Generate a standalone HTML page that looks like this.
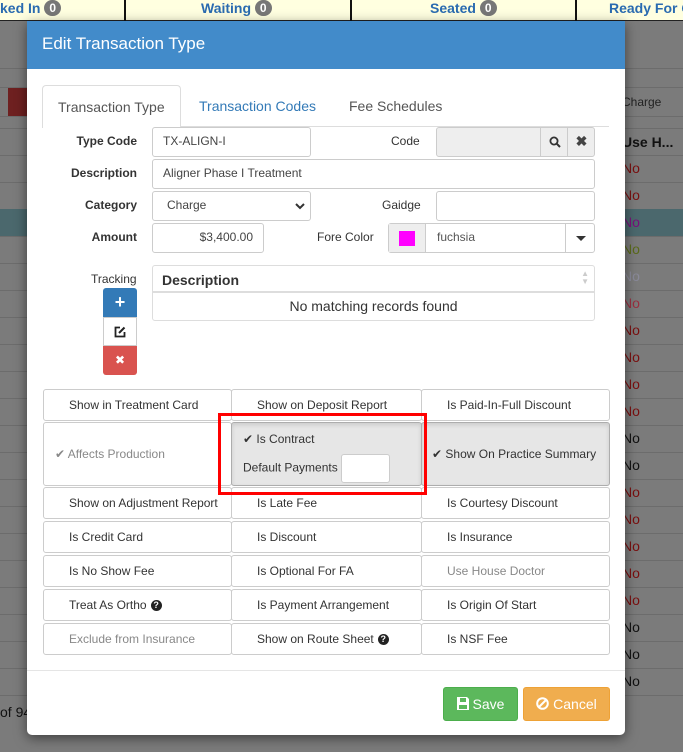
<!DOCTYPE html>
<html><head><meta charset="utf-8"><style>
*{box-sizing:border-box;margin:0;padding:0}
body{width:683px;height:752px;overflow:hidden;font-family:"Liberation Sans",sans-serif;background:#7b7b7b;position:relative;font-size:12px;color:#333}
.top{position:absolute;left:0;top:0;width:683px;height:21px;background:#ffffe0;border-bottom:1px solid #222}
.top div{position:absolute;top:0;height:21px;font-weight:bold;color:#2a6bb0;font-size:14px;line-height:17px}
.badge{display:inline-block;background:#777;color:#fff;border-radius:9px;font-size:12px;padding:0 5px;line-height:16px;vertical-align:1px}
.sep{position:absolute;top:0;width:2px;height:21px;background:#111}
.bgrow{position:absolute;left:0;width:683px;height:1px;background:#6c6c6c}
.no{position:absolute;left:622px;font-size:14px}
.modal{position:absolute;left:27px;top:21px;width:598px;height:714px;background:#fff;border-radius:0 0 5px 5px;box-shadow:0 3px 12px rgba(0,0,0,.5)}
.hdr{height:48px;background:#428bca;color:#fff;font-size:17px;padding:13px 0 0 15px}
.abs{position:absolute}
.inp{position:absolute;border:1px solid #ccc;border-radius:3px;background:#fff;font-size:12px;padding:0 10px;line-height:27px;color:#444}
.lbl{position:absolute;font-weight:bold;font-size:12px;text-align:right;color:#333}
.lbl2{position:absolute;font-size:12px;color:#333;white-space:nowrap}
.cell{position:absolute;border:1px solid #ccc;border-radius:3px;background:#fff;font-size:12px;color:#333;padding-left:25px;display:flex;align-items:center}
.gray{color:#888}
.act{background:#e6e6e6;border-color:#adadad;box-shadow:inset 0 2px 4px rgba(0,0,0,.12)}
.q{display:inline-block;width:11px;height:11px;border-radius:50%;background:#222;color:#fff;font-size:9px;font-weight:bold;text-align:center;line-height:11px;margin-left:4px}
</style></head><body>
<div class="top">
<div style="left:0">ked In <span class="badge">0</span></div>
<div style="left:201px">Waiting <span class="badge">0</span></div>
<div style="left:430px">Seated <span class="badge">0</span></div>
<div style="left:609px;white-space:nowrap">Ready For C</div>
<div class="sep" style="left:124px"></div><div class="sep" style="left:350px"></div><div class="sep" style="left:575px"></div>
</div>
<div class="abs" style="left:8px;top:88px;width:20px;height:28px;background:#6e2020"></div>
<div class="abs" style="left:622px;top:95px;font-size:12px;color:#222">Charge</div>
<div class="abs" style="left:622px;top:134px;font-size:14px;font-weight:bold;color:#111">Use H...</div>
<div class="abs" style="left:0;top:209px;width:683px;height:27px;background:#4b686d"></div>
<div class="bgrow" style="top:68px"></div><div class="bgrow" style="top:87px"></div><div class="bgrow" style="top:116px"></div>
<div class="bgrow" style="top:128px"></div><div class="bgrow" style="top:155px"></div><div class="bgrow" style="top:182px"></div><div class="bgrow" style="top:236px"></div><div class="bgrow" style="top:263px"></div><div class="bgrow" style="top:290px"></div><div class="bgrow" style="top:317px"></div><div class="bgrow" style="top:344px"></div><div class="bgrow" style="top:371px"></div><div class="bgrow" style="top:398px"></div><div class="bgrow" style="top:425px"></div><div class="bgrow" style="top:452px"></div><div class="bgrow" style="top:479px"></div><div class="bgrow" style="top:506px"></div><div class="bgrow" style="top:533px"></div><div class="bgrow" style="top:560px"></div><div class="bgrow" style="top:587px"></div><div class="bgrow" style="top:614px"></div><div class="bgrow" style="top:641px"></div><div class="bgrow" style="top:668px"></div><div class="bgrow" style="top:695px"></div>
<div class="no" style="top:160px;color:#7a0f0f">No</div>
<div class="no" style="top:187px;color:#7a0f0f">No</div>
<div class="no" style="top:214px;color:#7a107a">No</div>
<div class="no" style="top:241px;color:#5a6a1a">No</div>
<div class="no" style="top:268px;color:#8a8a9a">No</div>
<div class="no" style="top:295px;color:#9a3040">No</div>
<div class="no" style="top:322px;color:#7a0f0f">No</div>
<div class="no" style="top:349px;color:#7a0f0f">No</div>
<div class="no" style="top:376px;color:#7a0f0f">No</div>
<div class="no" style="top:403px;color:#7a0f0f">No</div>
<div class="no" style="top:430px;color:#111">No</div>
<div class="no" style="top:457px;color:#111">No</div>
<div class="no" style="top:484px;color:#7a0f0f">No</div>
<div class="no" style="top:511px;color:#7a0f0f">No</div>
<div class="no" style="top:538px;color:#7a0f0f">No</div>
<div class="no" style="top:565px;color:#7a0f0f">No</div>
<div class="no" style="top:592px;color:#7a0f0f">No</div>
<div class="no" style="top:619px;color:#111">No</div>
<div class="no" style="top:646px;color:#111">No</div>
<div class="no" style="top:673px;color:#111">No</div>
<div class="abs" style="left:0;top:704px;font-size:14px;color:#111">of 94</div>

<div class="modal">
<div class="hdr">Edit Transaction Type</div>
<div class="abs" style="left:15px;top:64px;width:139px;height:43px;border:1px solid #ddd;border-bottom:none;border-radius:4px 4px 0 0;background:#fff;font-size:14px;color:#555;padding:13px 0 0 15px">Transaction Type</div>
<div class="abs" style="left:153px;top:105px;width:429px;height:1px;background:#ddd"></div>
<div class="abs" style="left:172px;top:77px;font-size:14px;color:#337ab7">Transaction Codes</div>
<div class="abs" style="left:322px;top:77px;font-size:14px;color:#555">Fee Schedules</div>
<div class="lbl" style="left:20px;width:90px;top:113px">Type Code</div>
<div class="inp" style="left:125px;top:106px;width:159px;height:30px">TX-ALIGN-I</div>
<div class="lbl2" style="left:364px;top:113px">Code</div>
<div class="inp" style="left:409px;top:106px;width:159px;height:30px;background:#eee;padding:0">
<div class="abs" style="left:103px;top:0;width:28px;height:28px;border-left:1px solid #ccc;text-align:center"><svg width="12" height="12" viewBox="0 0 12 12" style="margin-top:8px"><circle cx="5" cy="5" r="3.6" fill="none" stroke="#333" stroke-width="1.8"/><path d="M7.6 7.6L11 11" stroke="#333" stroke-width="2"/></svg></div>
<div class="abs" style="left:130px;top:0;width:28px;height:28px;border-left:1px solid #ccc;text-align:center;font-weight:bold;font-size:14px;color:#444">✖</div>
</div>
<div class="lbl" style="left:20px;width:90px;top:145px">Description</div>
<div class="inp" style="left:125px;top:138px;width:443px;height:30px">Aligner Phase I Treatment</div>
<div class="lbl" style="left:20px;width:90px;top:177px">Category</div>
<div class="inp" style="left:125px;top:170px;width:159px;height:30px;padding-left:14px">Charge<svg class="abs" style="left:142px;top:11px" width="10" height="7" viewBox="0 0 10 7"><path d="M1 1l4 4 4-4" fill="none" stroke="#333" stroke-width="2"/></svg></div>
<div class="lbl2" style="left:355px;top:177px">Gaidge</div>
<div class="inp" style="left:409px;top:170px;width:159px;height:30px"></div>
<div class="lbl" style="left:20px;width:90px;top:209px">Amount</div>
<div class="inp" style="left:125px;top:202px;width:112px;height:30px;text-align:right">$3,400.00</div>
<div class="lbl2" style="left:290px;top:209px">Fore Color</div>
<div class="inp" style="left:361px;top:202px;width:207px;height:30px;padding:0">
<div class="abs" style="left:0;top:0;width:37px;height:28px;background:#eee;border-right:1px solid #ccc"><div class="abs" style="left:10px;top:7px;width:16px;height:15px;background:#f0f"></div></div>
<div class="abs" style="left:48px;top:0;color:#555">fuchsia</div>
<div class="abs" style="left:176px;top:0;width:30px;height:28px;border-left:1px solid #ccc"><div class="abs" style="left:10px;top:12px;border-left:5px solid transparent;border-right:5px solid transparent;border-top:5px solid #333"></div></div>
</div>
<div class="lbl2" style="left:64px;top:251px">Tracking</div>
<div class="abs" style="left:76px;top:267px;width:34px;height:29px;background:#337ab7;border-radius:3px 3px 0 0;color:#fff;text-align:center;font-size:18px;font-weight:bold;line-height:28px">+</div>
<div class="abs" style="left:76px;top:296px;width:34px;height:29px;background:#fff;border:1px solid #ccc;text-align:center"><svg width="12" height="12" viewBox="0 0 12 12" style="margin-top:8px"><path d="M6 1.5H1.5v9h9V6" fill="none" stroke="#222" stroke-width="1.8"/><path d="M5 7l5.5-5.5" stroke="#222" stroke-width="2"/></svg></div>
<div class="abs" style="left:76px;top:325px;width:34px;height:29px;background:#d9534f;border-radius:0 0 3px 3px;color:#fff;text-align:center;font-size:12px;line-height:29px">✖</div>
<div class="abs" style="left:125px;top:244px;width:443px;height:56px;border:1px solid #ddd;border-radius:3px">
<div style="height:27px;border-bottom:2px solid #ddd;font-weight:bold;font-size:14px;padding:6px 0 0 9px">Description<span class="abs" style="right:5px;top:4px;color:#ccc;font-size:8px;line-height:8px">▲<br>▼</span></div>
<div style="text-align:center;font-size:14px;padding-top:5px">No matching records found</div>
</div>
<div class="cell" style="left:16px;top:368px;width:189px;height:32px">Show in Treatment Card</div>
<div class="cell" style="left:204px;top:368px;width:191px;height:32px">Show on Deposit Report</div>
<div class="cell" style="left:394px;top:368px;width:189px;height:32px">Is Paid-In-Full Discount</div>
<div class="cell gray" style="left:16px;top:401px;width:189px;height:64px;padding-left:11px">✔ Affects Production</div>
<div class="cell act" style="left:204px;top:401px;width:191px;height:64px;padding-left:11px;display:block">
<div style="margin-top:9px">✔ Is Contract</div>
<div style="margin-top:8px">Default Payments <span style="display:inline-block;width:49px;height:29px;background:#fff;border:1px solid #ccc;border-radius:3px;vertical-align:middle"></span></div>
</div>
<div class="cell act" style="left:394px;top:401px;width:189px;height:64px;padding-left:10px">✔ Show On Practice Summary</div>
<div class="cell" style="left:16px;top:466px;width:189px;height:32px">Show on Adjustment Report</div>
<div class="cell" style="left:204px;top:466px;width:191px;height:32px">Is Late Fee</div>
<div class="cell" style="left:394px;top:466px;width:189px;height:32px">Is Courtesy Discount</div>
<div class="cell" style="left:16px;top:500px;width:189px;height:32px">Is Credit Card</div>
<div class="cell" style="left:204px;top:500px;width:191px;height:32px">Is Discount</div>
<div class="cell" style="left:394px;top:500px;width:189px;height:32px">Is Insurance</div>
<div class="cell" style="left:16px;top:534px;width:189px;height:32px">Is No Show Fee</div>
<div class="cell" style="left:204px;top:534px;width:191px;height:32px">Is Optional For FA</div>
<div class="cell gray" style="left:394px;top:534px;width:189px;height:32px">Use House Doctor</div>
<div class="cell" style="left:16px;top:568px;width:189px;height:32px">Treat As Ortho<span class="q">?</span></div>
<div class="cell" style="left:204px;top:568px;width:191px;height:32px">Is Payment Arrangement</div>
<div class="cell" style="left:394px;top:568px;width:189px;height:32px">Is Origin Of Start</div>
<div class="cell gray" style="left:16px;top:602px;width:189px;height:32px">Exclude from Insurance</div>
<div class="cell" style="left:204px;top:602px;width:191px;height:32px">Show on Route Sheet<span class="q">?</span></div>
<div class="cell" style="left:394px;top:602px;width:189px;height:32px">Is NSF Fee</div>
<div class="abs" style="left:191px;top:392px;width:209px;height:82px;border:3px solid #f00;z-index:5"></div>
<div class="abs" style="left:0;top:649px;width:598px;height:1px;background:#e5e5e5"></div>
<div class="abs" style="left:416px;top:666px;width:75px;height:34px;background:#5cb85c;border:1px solid #4cae4c;border-radius:3px;color:#fff;font-size:14px;line-height:32px;text-align:center"><svg width="12" height="13" viewBox="0 0 12 13" style="vertical-align:-1px"><path d="M0 0h10l2 2v11H0z M3 1v4h6V1z M2 8v4h8V8z" fill="#fff" fill-rule="evenodd"/></svg> Save</div>
<div class="abs" style="left:496px;top:666px;width:87px;height:34px;background:#f0ad4e;border:1px solid #eea236;border-radius:3px;color:#fff;font-size:14px;line-height:32px;text-align:center"><svg width="13" height="13" viewBox="0 0 13 13" style="vertical-align:-1px"><circle cx="6.5" cy="6.5" r="5.3" fill="none" stroke="#fff" stroke-width="2"/><path d="M3 10L10 3" stroke="#fff" stroke-width="2"/></svg> Cancel</div>
</div>
</body></html>
